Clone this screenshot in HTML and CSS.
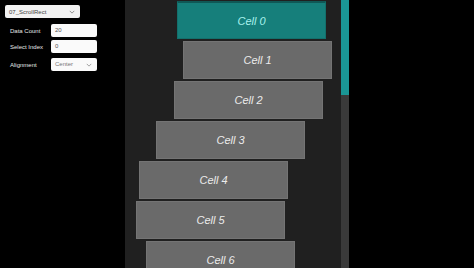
FILE: index.html
```html
<!DOCTYPE html>
<html>
<head>
<meta charset="utf-8">
<link rel="stylesheet" href="styles.css">
</head>
<body>
<div class="app">
  <aside class="controls">
    <div class="select scene">
      <span>07_ScrollRect</span>
      <svg class="chev" viewBox="0 0 8 5" width="6" height="4"><polyline points="1,1 4,4 7,1" fill="none" stroke="#8a8a8a" stroke-width="1.2"/></svg>
    </div>
    <div class="row r1">
      <span class="label">Data Count</span>
      <div class="input">20</div>
    </div>
    <div class="row r2">
      <span class="label">Select Index</span>
      <div class="input">0</div>
    </div>
    <div class="row r3">
      <span class="label">Alignment</span>
      <div class="input select">
        <span>Center</span>
        <svg class="chev" viewBox="0 0 8 5" width="6" height="4"><polyline points="1,1 4,4 7,1" fill="none" stroke="#9a9a9a" stroke-width="1.2"/></svg>
      </div>
    </div>
  </aside>
  <section class="scroller">
    <div class="viewport">
      <div class="cell selected c0">Cell 0</div>
      <div class="cell c1">Cell 1</div>
      <div class="cell c2">Cell 2</div>
      <div class="cell c3">Cell 3</div>
      <div class="cell c4">Cell 4</div>
      <div class="cell c5">Cell 5</div>
      <div class="cell c6">Cell 6</div>
    </div>
    <div class="scrollbar"><div class="handle"></div></div>
  </section>
</div>
</body>
</html>
```

FILE: styles.css
```css
html, body {
  margin: 0;
  padding: 0;
  background: #000;
  width: 474px;
  height: 268px;
  overflow: hidden;
  font-family: "Liberation Sans", Arial, sans-serif;
}

.app {
  display: flex;
  height: 268px;
}

.controls {
  width: 125px;
  flex: none;
  display: flex;
  flex-direction: column;
  box-sizing: border-box;
  padding: 5px 0 0 5px;
}

.select {
  display: flex;
  align-items: center;
  justify-content: space-between;
}

.scene {
  width: 75px;
  height: 13px;
  box-sizing: border-box;
  background: #f2f2f2;
  border-radius: 2px;
  padding: 0 5px 0 4px;
  font-size: 6px;
  color: #444;
}

.row {
  display: flex;
  align-items: center;
  height: 13px;
}

.r1 { margin-top: 6px; }
.r2 { margin-top: 3px; }
.r3 { margin-top: 5px; }

.label {
  width: 41px;
  padding-left: 5px;
  font-size: 6px;
  color: #e6e6e6;
}

.input {
  width: 46px;
  height: 13px;
  box-sizing: border-box;
  background: #fafafa;
  border-radius: 2px;
  padding: 0 5px 0 4px;
  font-size: 6px;
  line-height: 13px;
  color: #555;
}

.input.select {
  color: #777;
}

.chev {
  display: block;
}

.scroller {
  display: flex;
  width: 224px;
  flex: none;
  height: 268px;
}

.viewport {
  width: 216px;
  height: 268px;
  background: #202020;
  overflow: hidden;
  display: flex;
  flex-direction: column;
  gap: 2px;
  padding-top: 1px;
  box-sizing: border-box;
}

.cell {
  flex: none;
  width: 149px;
  height: 38px;
  box-sizing: border-box;
  background: #6a6a6a;
  border: 1px solid #747474;
  display: flex;
  align-items: center;
  justify-content: center;
  font-size: 11px;
  font-style: italic;
  color: #ececec;
}

.cell.selected {
  background: #167f7b;
  border: 1px solid #13706c;
  border-top: 2px solid #0f5856;
  color: #a8f2ee;
}

.c0 { margin-left: 52px; }
.c1 { margin-left: 58px; }
.c2 { margin-left: 49px; }
.c3 { margin-left: 31px; }
.c4 { margin-left: 14px; }
.c5 { margin-left: 11px; }
.c6 { margin-left: 21px; }

.scrollbar {
  width: 8px;
  height: 268px;
  background: #3a3a3a;
}

.handle {
  height: 95px;
  background: #1a9695;
}
```
